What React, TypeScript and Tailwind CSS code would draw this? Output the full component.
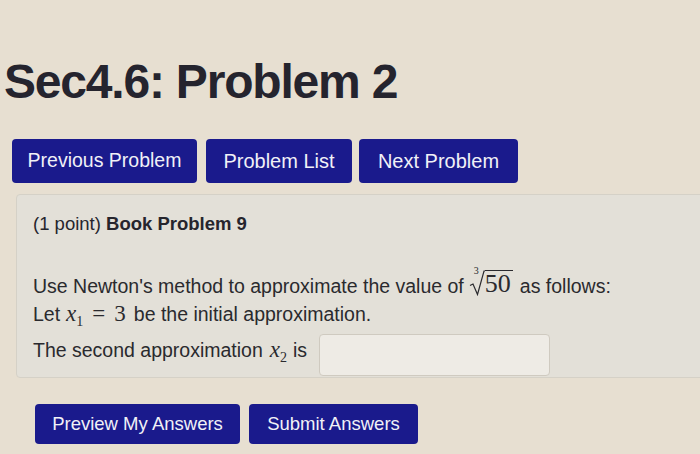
import React from "react";

const sans = { fontFamily: '"Liberation Sans", Arial, sans-serif' };
const serif = { fontFamily: '"Liberation Serif", "Times New Roman", serif' };

function Var({ name, sub }: { name: string; sub: string }) {
  return (
    <span style={serif} className="inline-flex items-baseline">
      <span className="italic text-[23px]">{name}</span>
      <span className="text-[14px] relative top-[5px]">{sub}</span>
    </span>
  );
}

function CubeRoot50() {
  return (
    <span style={serif} className="inline-flex items-start relative top-[3px] ml-[5px] mr-[7px]">
      <span className="relative w-[16px] h-[26px]">
        <span className="absolute left-[5px] -top-[4px] text-[10px] leading-none">3</span>
        <svg width="16" height="26" viewBox="0 0 16 26" className="absolute left-0 top-0">
          <path d="M1 15.5 L4 14 L8.5 24.5 L15 1 L16 1" fill="none" stroke="#2a2a2e" strokeWidth="1.2" />
        </svg>
      </span>
      <span className="border-t-[1.2px] border-[#2a2a2e] text-[26px] leading-[24px] pt-[1px] pr-[2px]">50</span>
    </span>
  );
}

function BlueButton({ children, className }: { children: React.ReactNode; className?: string }) {
  return (
    <button
      className={
        "bg-[#1a1a8c] text-[#f1f1f7] rounded-[4px] flex items-center justify-center whitespace-nowrap " +
        (className ?? "")
      }
    >
      {children}
    </button>
  );
}

export default function App() {
  return (
    <div style={sans} className="w-[700px] h-[454px] overflow-hidden bg-[#e7dfd1] text-[#26252d]">
      {/* Title */}
      <h1 className="pt-[57px] ml-[4px] text-[48px] leading-[49px] font-bold tracking-[-1.2px] text-[#25242e]">
        Sec4.6: Problem 2
      </h1>

      {/* Navigation */}
      <div className="flex ml-[12px] mt-[33px]">
        <BlueButton className="h-[44px] w-[185px] text-[19.5px]">Previous Problem</BlueButton>
        <BlueButton className="h-[44px] w-[146px] ml-[9px] text-[20px]">Problem List</BlueButton>
        <BlueButton className="h-[44px] w-[159px] ml-[7px] text-[20px]">Next Problem</BlueButton>
      </div>

      {/* Problem panel */}
      <div className="ml-[16px] mt-[11px] w-[700px] h-[184px] bg-[#e3e0d8] border border-[#d5d1c7] rounded-[4px] pl-[16px] pt-[18px]">
        <p className="text-[18.5px] leading-[22px]">
          (1 point) <span className="font-bold">Book Problem 9</span>
        </p>

        <div className="mt-[32px] text-[19.5px] leading-[28px] text-[#2a2a2e]">
          <p className="flex items-baseline">
            Use Newton's method to approximate the value of
            <CubeRoot50 />
            as follows:
          </p>
          <p className="flex items-baseline">
            <span>Let</span>
            <span className="ml-[6px]">
              <Var name="x" sub="1" />
            </span>
            <span style={serif} className="text-[23px] mx-[9px]">=</span>
            <span style={serif} className="text-[23px]">3</span>
            <span className="ml-[8px]">be the initial approximation.</span>
          </p>
          <div className="flex items-center mt-[3px]">
            <span className="pb-[8px] flex items-baseline">
              The second approximation
              <span className="ml-[7px] mr-[6px]">
                <Var name="x" sub="2" />
              </span>
              is
            </span>
            <div className="ml-[12px] w-[231px] h-[42px] bg-[#eeebe5] border border-[#cfcac0] rounded-[4px]" />
          </div>
        </div>
      </div>

      {/* Submit buttons */}
      <div className="flex ml-[35px] mt-[26px]">
        <BlueButton className="h-[40px] w-[205px] text-[18.5px]">Preview My Answers</BlueButton>
        <BlueButton className="h-[40px] w-[169px] ml-[9px] text-[18.5px]">Submit Answers</BlueButton>
      </div>
    </div>
  );
}
